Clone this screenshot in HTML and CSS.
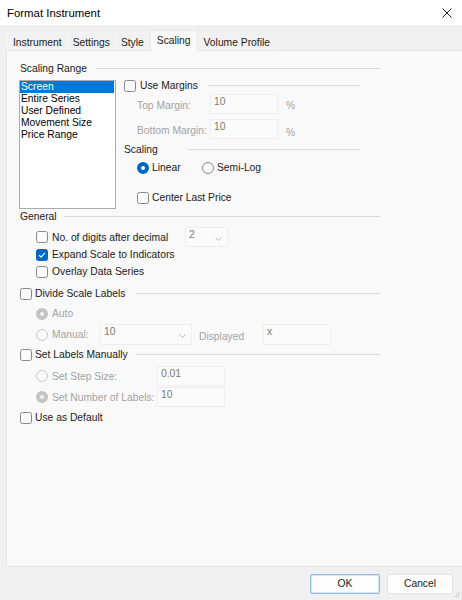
FILE: index.html
```html
<!DOCTYPE html>
<html>
<head>
<meta charset="utf-8">
<link rel="stylesheet" href="styles.css">
</head>
<body>
<div class="window">
  <div class="titlebar">
    <span class="title">Format Instrument</span>
    <svg class="close" width="10" height="10" viewBox="0 0 10 10"><path d="M0.5 0.5 L9.5 9.5 M9.5 0.5 L0.5 9.5" stroke="#222" stroke-width="1" fill="none"/></svg>
  </div>
  <div class="tabs">
    <div class="tab">Instrument</div>
    <div class="tab">Settings</div>
    <div class="tab">Style</div>
    <div class="tab tab-active">Scaling</div>
    <div class="tab">Volume Profile</div>
  </div>
  <div class="panel">
    <div class="hdr g360">
      <span class="hlabel lw-75">Scaling Range</span><i class="rule"></i>
    </div>
    <div class="range">
      <div class="listbox">
        <div class="item sel">Screen</div>
        <div class="item">Entire Series</div>
        <div class="item">User Defined</div>
        <div class="item">Movement Size</div>
        <div class="item">Price Range</div>
      </div>
      <div class="rcol">
        <div class="hdr">
          <span class="cb"></span><span class="hlabel lw-67 ml4">Use Margins</span><i class="rule"></i>
        </div>
        <div class="field mt2">
          <span class="flabel dis">Top Margin:</span>
          <span class="input w68">10</span>
          <span class="pct dis">%</span>
        </div>
        <div class="field mt5">
          <span class="flabel dis">Bottom Margin:</span>
          <span class="input w68">10</span>
          <span class="pct dis pct-low">%</span>
        </div>
        <div class="hdr mt5">
          <span class="hlabel lw-63">Scaling</span><i class="rule"></i>
        </div>
        <div class="row ind13 mt6">
          <span class="opt w65"><span class="rb on"></span><span class="ml3">Linear</span></span>
          <span class="opt"><span class="rb"></span><span class="ml3">Semi-Log</span></span>
        </div>
        <div class="row ind13 mt18">
          <span class="cb"></span><span class="ml3">Center Last Price</span>
        </div>
      </div>
    </div>

    <div class="hdr g360 mt2">
      <span class="hlabel lw-44">General</span><i class="rule"></i>
    </div>
    <div class="field ind16 mt4">
      <span class="cb"></span><span class="ml4 lw-133">No. of digits after decimal</span>
      <span class="input combo w43">2<svg class="chev" width="7" height="4" viewBox="0 0 7 4"><path d="M0.5 0.5 L3.5 3.5 L6.5 0.5" stroke="#b5b5b5" fill="none"/></svg></span>
    </div>
    <div class="row ind16 mt2">
      <span class="cb checked"><svg width="12" height="12" viewBox="0 0 12 12"><path d="M3 6.2 L5 8.2 L9 3.8" stroke="#fff" stroke-width="1.1" fill="none"/></svg></span><span class="ml4">Expand Scale to Indicators</span>
    </div>
    <div class="row ind16 mt5">
      <span class="cb"></span><span class="ml4">Overlay Data Series</span>
    </div>

    <div class="hdr g360 mt10">
      <span class="cb"></span><span class="hlabel lw-101 ml3">Divide Scale Labels</span><i class="rule"></i>
    </div>
    <div class="row ind16 mt8">
      <span class="rb dis-on"></span><span class="ml4 dis">Auto</span>
    </div>
    <div class="field h21 ind16 mt4">
      <span class="rb dis-off"></span><span class="ml4 lw-48 dis">Manual:</span>
      <span class="input combo w92 h21">10<svg class="chev" width="7" height="4" viewBox="0 0 7 4"><path d="M0.5 0.5 L3.5 3.5 L6.5 0.5" stroke="#c0c0c0" fill="none"/></svg></span>
      <span class="ml7 lw-64 dis disp">Displayed</span>
      <span class="input w68 h21">x</span>
    </div>

    <div class="hdr g360 mt4">
      <span class="cb"></span><span class="hlabel lw-101 ml3">Set Labels Manually</span><i class="rule"></i>
    </div>
    <div class="field ind16 mt5">
      <span class="rb dis-off"></span><span class="ml4 lw-105 dis">Set Step Size:</span>
      <span class="input w68">0.01</span>
    </div>
    <div class="field ind16 mt1">
      <span class="rb dis-on"></span><span class="ml4 lw-105 dis">Set Number of Labels:</span>
      <span class="input w68">10</span>
    </div>

    <div class="row mt5">
      <span class="cb"></span><span class="ml3">Use as Default</span>
    </div>
  </div>
  <div class="footer">
    <div class="btn btn-default">OK</div>
    <div class="btn">Cancel</div>
  </div>
  <svg class="grip" width="7" height="7" viewBox="0 0 7 7">
    <rect x="5" y="1" width="1" height="1" fill="#b8b8b8"/>
    <rect x="3" y="3" width="1" height="1" fill="#b8b8b8"/>
    <rect x="5" y="3" width="1" height="1" fill="#b8b8b8"/>
    <rect x="1" y="5" width="1" height="1" fill="#b8b8b8"/>
    <rect x="3" y="5" width="1" height="1" fill="#b8b8b8"/>
    <rect x="5" y="5" width="1" height="1" fill="#b8b8b8"/>
  </svg>
</div>
</body>
</html>
```

FILE: styles.css
```css
html, body {
  margin: 0;
  padding: 0;
}
body {
  background: #f0f0f0;
  font-family: "Liberation Sans", Arial, sans-serif;
  font-size: 10.3px;
  color: #1a1a1a;
}
.window {
  position: relative;
  width: 462px;
  height: 600px;
  overflow: hidden;
}
.titlebar {
  height: 25px;
  background: #ffffff;
  display: flex;
  align-items: center;
  justify-content: space-between;
  padding: 0 10px 0 7px;
}
.title {
  font-size: 11.4px;
  color: #000;
  margin-top: 1px;
}
.close {
  margin-top: 1px;
}
.tabs {
  height: 25px;
  display: flex;
  align-items: flex-end;
  padding-left: 7px;
  position: relative;
  z-index: 2;
}
.tab {
  height: 15px;
  padding: 3px 5px 0 5px;
  line-height: 16px;
  background: #f1f1f1;
  border-left: 1px solid #f7f7f7;
  color: #1a1a1a;
}
.tab-active {
  height: 20px;
  line-height: 19px;
  padding: 0 6px 0 6px;
  margin: 0 0 -1px 1px;
  background: #f9f9f9;
  border: 1px solid #e9e9e9;
  border-bottom: none;
}
.panel {
  margin-left: 6px;
  width: 447px;
  background: #f9f9f9;
  border: 1px solid #e6e6e6;
  padding: 12px 0 0 13px;
  box-sizing: content-box;
  height: 503px;
}
.hdr {
  display: flex;
  align-items: center;
  height: 12px;
  line-height: 12px;
}
.g360 {
  width: 360px;
}
.hlabel {
  flex: none;
}
.rule {
  flex: 1;
  height: 0;
  border-top: 1px solid #dadada;
  margin-top: -1px;
}
.lw-75 { width: 75px; }
.lw-67 { width: 67px; }
.lw-63 { width: 63px; }
.lw-44 { width: 44px; }
.lw-101 { width: 101px; }
.lw-133 { width: 133px; }
.lw-48 { width: 48px; }
.lw-64 { width: 64px; }
.lw-105 { width: 105px; }
.ml3 { margin-left: 3px; }
.ml4 { margin-left: 4px; }
.ml7 { margin-left: 7px; }
.mt1 { margin-top: 1px; }
.mt2 { margin-top: 2px; }
.mt3 { margin-top: 3px; }
.mt4 { margin-top: 4px; }
.mt5 { margin-top: 5px; }
.mt6 { margin-top: 6px; }
.mt8 { margin-top: 8px; }
.mt10 { margin-top: 10px; }
.mt18 { margin-top: 18px; }
.ind13 { padding-left: 13px; }
.ind16 { padding-left: 16px; }
.range {
  display: flex;
  margin-top: 5px;
}
.listbox {
  margin-left: -1px;
  width: 97px;
  height: 129px;
  box-sizing: border-box;
  border: 1px solid #a9abb0;
  background: #ffffff;
}
.item {
  height: 12px;
  line-height: 12px;
  padding-left: 1px;
  margin-right: 1px;
  color: #000;
}
.item.sel {
  background: #0078d7;
  color: #ffffff;
}
.rcol {
  margin-left: 8px;
  width: 236px;
}
.row {
  display: flex;
  align-items: center;
  height: 12px;
  line-height: 12px;
}
.field {
  display: flex;
  align-items: center;
  height: 20px;
}
.field.h21 {
  height: 21px;
}
.flabel {
  width: 73px;
  padding-left: 13px;
  flex: none;
  margin-top: 2px;
}
.dis {
  color: #a3a3a3;
}
.disp {
  margin-top: 3px;
}
.pct {
  margin-left: 8px;
  margin-top: 3px;
}
.pct-low {
  margin-top: 6px;
}
.input {
  flex: none;
  height: 20px;
  box-sizing: border-box;
  background: #fbfbfb;
  border: 1px solid #eeeeee;
  color: #7a7a7a;
  padding: 1px 0 0 3px;
  line-height: 12px;
  align-self: flex-start;
  position: relative;
}
.input.h21 { height: 21px; }
.w68 { width: 68px; }
.w43 { width: 43px; }
.w92 { width: 92px; }
.w65 { width: 65px; }
.combo .chev {
  position: absolute;
  right: 5px;
  top: 9px;
}
.opt {
  display: flex;
  align-items: center;
}
.cb {
  flex: none;
  width: 12px;
  height: 12px;
  box-sizing: border-box;
  border: 1px solid #888888;
  border-radius: 2.5px;
  background: #fbfbfb;
  display: block;
  position: relative;
}
.cb.checked {
  background: #0067c0;
  border-color: #0067c0;
}
.cb.checked svg {
  position: absolute;
  left: -1px;
  top: -1px;
}
.rb {
  flex: none;
  width: 12px;
  height: 12px;
  box-sizing: border-box;
  border: 1px solid #888888;
  border-radius: 50%;
  background: #fbfbfb;
  display: block;
}
.rb.on {
  border: 4px solid #0067c0;
  background: #ffffff;
}
.rb.dis-on {
  border: 4px solid #c3c3c3;
  background: #f4f4f4;
}
.rb.dis-off {
  border: 1px solid #c9c9c9;
  background: #f9f9f9;
}
.footer {
  display: flex;
  justify-content: flex-end;
  padding: 7px 9px 0 0;
}
.btn {
  height: 20px;
  box-sizing: border-box;
  line-height: 18px;
  text-align: center;
  background: #fdfdfd;
  border: 1px solid #e2e2e2;
  border-radius: 2px;
  color: #1a1a1a;
  width: 66px;
  margin-left: 7px;
}
.btn-default {
  width: 70px;
  border: 1px solid #8fbbe3;
  box-shadow: inset 0 0 0 1px #d3e5f5;
}
.grip {
  position: absolute;
  right: 2px;
  bottom: 2px;
}
```
